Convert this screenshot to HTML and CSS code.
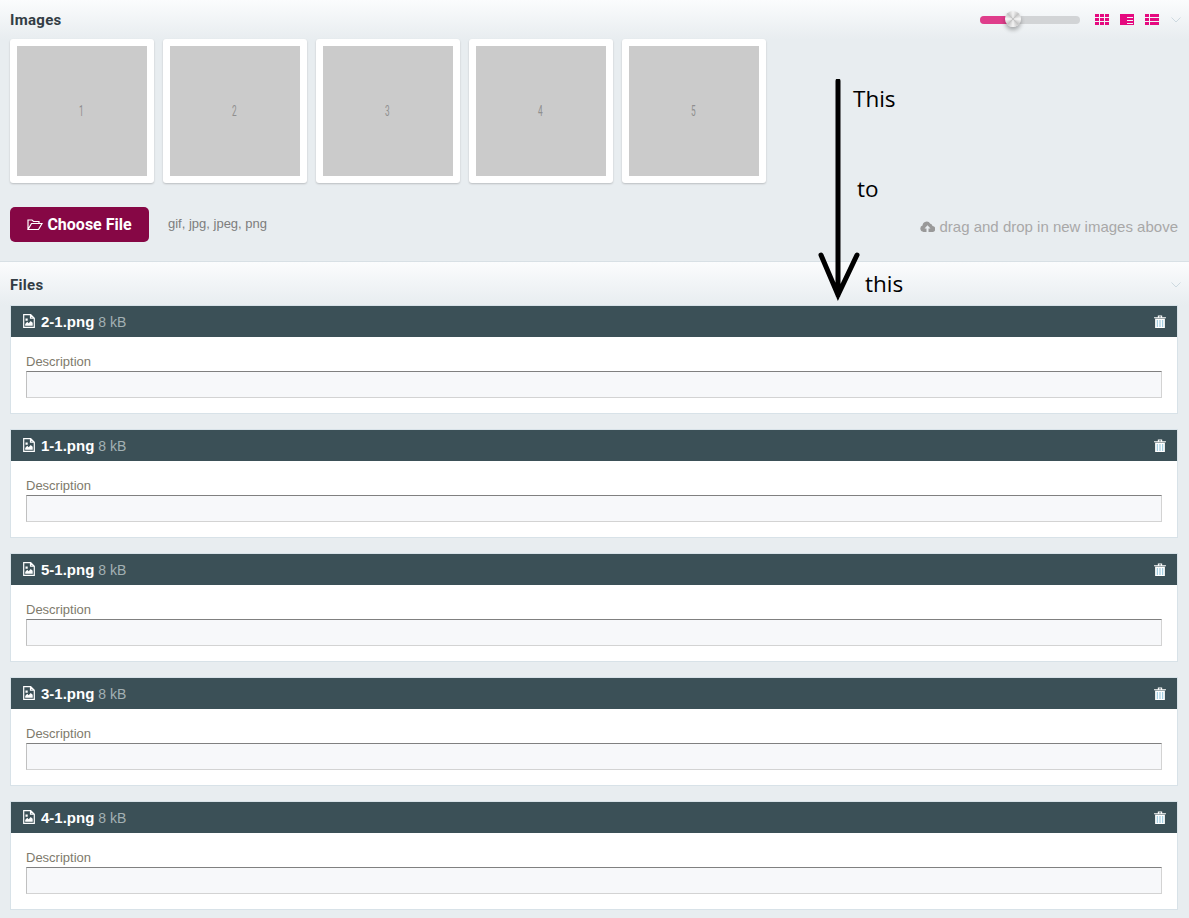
FILE: index.html
```html
<!DOCTYPE html>
<html lang="en">
<head>
    <meta charset="UTF-8">
    <title>Images and Files</title>
    <link rel="stylesheet" href="styles.css">
</head>
<body>
<section class="images">
    <div class="section-head images-head">
        <h2>Images</h2>
        <div class="tools">
            <div class="slider"><div class="slider-fill"></div><div class="slider-knob"></div></div>
            <svg class="view" viewBox="0 0 14 11"><path d="M0 0h4v3H0zM5 0h4v3H5zM10 0h4v3h-4zM0 4h4v3H0zM5 4h4v3H5zM10 4h4v3h-4zM0 8h4v3H0zM5 8h4v3H5zM10 8h4v3h-4z"/></svg>
            <svg class="view" viewBox="0 0 14 11"><path fill-rule="evenodd" d="M0 0h14v11H0zM7 3h6v1H7zM7 6h6v1H7zM7 9h6v1H7z"/></svg>
            <svg class="view" viewBox="0 0 14 11"><path d="M0 0h4v3H0zM5 0h9v3H5zM0 4h4v3H0zM5 4h9v3H5zM0 8h4v3H0zM5 8h9v3H5z"/></svg>
            <svg class="chevron" viewBox="0 0 10 6"><path d="M.5.5 5 5 9.500.5"/></svg>
        </div>
    </div>
    <div class="thumbs">
        <div class="thumb"><div class="thumb-img"><span>1</span></div></div>
        <div class="thumb"><div class="thumb-img"><span>2</span></div></div>
        <div class="thumb"><div class="thumb-img"><span>3</span></div></div>
        <div class="thumb"><div class="thumb-img"><span>4</span></div></div>
        <div class="thumb"><div class="thumb-img"><span>5</span></div></div>
    </div>
    <div class="upload">
        <button class="btn-choose">
            <svg class="icon-folder" viewBox="0 0 16 13"><path d="M1 11V2h4l1.500 1.500H12V5.500M1 11.500h10.500L15 5.500H4.500L1 11.500z"/></svg>
            Choose File
        </button>
        <span class="types">gif, jpg, jpeg, png</span>
        <span class="drop-hint">
            <svg class="icon-cloud" viewBox="0 0 15 11"><path d="M3.500 11a3.300 3.300 0 0 1-1-6.400A4.200 4.200 0 0 1 10.300 2.700 2.600 2.600 0 0 1 12.500 5 3 3 0 0 1 12 11H8.500V7.500h2L7.500 4.300 4.500 7.500h2V11z"/></svg>
            drag and drop in new images above
        </span>
    </div>
</section>

<section class="files">
    <div class="section-head files-head">
        <h2>Files</h2>
        <svg class="chevron" viewBox="0 0 10 6"><path d="M.5.5 5 5 9.500.5"/></svg>
    </div>
    <div class="file-card">
        <div class="file-bar">
            <svg class="icon-file" viewBox="0 0 12 14"><path class="outline" d="M.7.7h7L11.300 4.200v9.100H.7zM7.500.7v3.500h3.800"/><path d="M2.200 11.800V10l2-2.200 1.500 1.500 2-2.300 2 1.800v3zM2.500 4.500h2.200v2.200H2.500z"/></svg>
            <span class="file-name">2-1.png</span> <span class="file-size">8 kB</span>
            <svg class="icon-trash" viewBox="0 0 11 12"><path d="M3.500 2V.5h4V2H11v1H0V2zM4.500 2h2V1.300h-2zM1 3.500h9V12H1z"/><path class="trash-bars" d="M2.500 4.500h1.200V11H2.500zM4.900 4.500h1.200V11H4.900zM7.300 4.500h1.200V11H7.300z"/></svg>
        </div>
        <div class="file-body">
            <label>Description</label>
            <input type="text">
        </div>
    </div>
    <div class="file-card">
        <div class="file-bar">
            <svg class="icon-file" viewBox="0 0 12 14"><path class="outline" d="M.7.7h7L11.300 4.200v9.100H.7zM7.500.7v3.500h3.800"/><path d="M2.200 11.800V10l2-2.200 1.500 1.500 2-2.300 2 1.800v3zM2.500 4.500h2.200v2.200H2.500z"/></svg>
            <span class="file-name">1-1.png</span> <span class="file-size">8 kB</span>
            <svg class="icon-trash" viewBox="0 0 11 12"><path d="M3.500 2V.5h4V2H11v1H0V2zM4.500 2h2V1.300h-2zM1 3.500h9V12H1z"/><path class="trash-bars" d="M2.500 4.500h1.200V11H2.500zM4.900 4.500h1.200V11H4.900zM7.300 4.500h1.200V11H7.300z"/></svg>
        </div>
        <div class="file-body">
            <label>Description</label>
            <input type="text">
        </div>
    </div>
    <div class="file-card">
        <div class="file-bar">
            <svg class="icon-file" viewBox="0 0 12 14"><path class="outline" d="M.7.7h7L11.300 4.200v9.100H.7zM7.500.7v3.500h3.800"/><path d="M2.200 11.800V10l2-2.200 1.500 1.500 2-2.300 2 1.800v3zM2.500 4.500h2.200v2.200H2.500z"/></svg>
            <span class="file-name">5-1.png</span> <span class="file-size">8 kB</span>
            <svg class="icon-trash" viewBox="0 0 11 12"><path d="M3.500 2V.5h4V2H11v1H0V2zM4.500 2h2V1.300h-2zM1 3.500h9V12H1z"/><path class="trash-bars" d="M2.500 4.500h1.200V11H2.500zM4.900 4.500h1.200V11H4.900zM7.300 4.500h1.200V11H7.300z"/></svg>
        </div>
        <div class="file-body">
            <label>Description</label>
            <input type="text">
        </div>
    </div>
    <div class="file-card">
        <div class="file-bar">
            <svg class="icon-file" viewBox="0 0 12 14"><path class="outline" d="M.7.7h7L11.300 4.200v9.100H.7zM7.500.7v3.500h3.800"/><path d="M2.200 11.800V10l2-2.200 1.500 1.500 2-2.300 2 1.800v3zM2.500 4.500h2.200v2.200H2.500z"/></svg>
            <span class="file-name">3-1.png</span> <span class="file-size">8 kB</span>
            <svg class="icon-trash" viewBox="0 0 11 12"><path d="M3.500 2V.5h4V2H11v1H0V2zM4.500 2h2V1.300h-2zM1 3.500h9V12H1z"/><path class="trash-bars" d="M2.500 4.500h1.200V11H2.500zM4.900 4.500h1.200V11H4.900zM7.300 4.500h1.200V11H7.300z"/></svg>
        </div>
        <div class="file-body">
            <label>Description</label>
            <input type="text">
        </div>
    </div>
    <div class="file-card">
        <div class="file-bar">
            <svg class="icon-file" viewBox="0 0 12 14"><path class="outline" d="M.7.7h7L11.300 4.200v9.100H.7zM7.500.7v3.500h3.800"/><path d="M2.200 11.800V10l2-2.200 1.500 1.500 2-2.300 2 1.800v3zM2.500 4.500h2.200v2.200H2.500z"/></svg>
            <span class="file-name">4-1.png</span> <span class="file-size">8 kB</span>
            <svg class="icon-trash" viewBox="0 0 11 12"><path d="M3.500 2V.5h4V2H11v1H0V2zM4.500 2h2V1.300h-2zM1 3.500h9V12H1z"/><path class="trash-bars" d="M2.500 4.500h1.200V11H2.500zM4.900 4.500h1.200V11H4.900zM7.300 4.500h1.200V11H7.300z"/></svg>
        </div>
        <div class="file-body">
            <label>Description</label>
            <input type="text">
        </div>
    </div>
</section>

<!-- hand drawn note on top of the page -->
<svg class="arrow" viewBox="0 0 60 230"><path d="M20 2V216M3 176 20 216 39 176"/></svg>
<span class="note note-this">This</span>
<span class="note note-to">to</span>
<span class="note note-last">this</span>
</body>
</html>
```

FILE: styles.css
```css
* {
    margin: 0;
    padding: 0;
    box-sizing: border-box;
}
html, body {
    height: 918px;
    overflow: hidden;
}
body {
    position: relative;
    font-family: "Liberation Sans", Arial, sans-serif;
    background: #e8edf0;
    color: #39424a;
}
.section-head {
    display: flex;
    justify-content: space-between;
    background: linear-gradient(#fbfcfd, #e8edf0);
}
.section-head h2 {
    font-family: Roboto, "Liberation Sans", sans-serif;
    font-size: 15px;
    line-height: 17px;
    font-weight: 700;
    letter-spacing: 0.3px;
    color: #333d45;
}
.images {
    height: 261px;
}
.images-head {
    height: 39px;
    padding: 12px 8px 0 10px;
}
.tools {
    display: flex;
    align-items: flex-start;
    height: 20px;
    padding-top: 2px;
}
.slider {
    position: relative;
    width: 100px;
    height: 8px;
    margin: 2px 15px 0 0;
    background: #d2d4d6;
    border-radius: 4px;
}
.slider-fill {
    width: 33px;
    height: 8px;
    background: #df3d8b;
    border-radius: 4px 0 0 4px;
}
.slider-knob {
    position: absolute;
    left: 25px;
    top: -5px;
    width: 16px;
    height: 16px;
    border-radius: 50%;
    background: conic-gradient(#f4f4f4, #c4c4c4, #f8f8f8, #c4c4c4, #f4f4f4, #c4c4c4, #f8f8f8, #c4c4c4, #f4f4f4);
    box-shadow: 0 3px 4px rgba(0, 0, 0, 0.3);
}
.view {
    width: 14px;
    height: 11px;
    margin-right: 11px;
    fill: #e5097f;
}
.chevron {
    width: 10px;
    height: 6px;
    margin: 3px 0 0 1px;
    fill: none;
    stroke: #cdd9e0;
    stroke-width: 1;
}
.thumbs {
    display: flex;
    gap: 9px;
    padding-left: 10px;
}
.thumb {
    width: 144px;
    height: 144px;
    padding: 7px;
    background: #fff;
    border-radius: 3px;
    box-shadow: 0 1px 2px rgba(0, 0, 0, 0.2);
}
.thumb-img {
    display: flex;
    align-items: center;
    justify-content: center;
    height: 130px;
    padding-right: 2px;
    background: #cbcbcb;
    color: #8f8f8f;
    font-family: Roboto, "Liberation Sans", sans-serif;
    font-size: 15px;
}
.thumb-img span {
    display: block;
    transform: scaleX(0.55);
}
.upload {
    display: flex;
    align-items: flex-start;
    margin-top: 24px;
    padding: 0 11px 0 10px;
}
.btn-choose {
    display: flex;
    align-items: center;
    justify-content: center;
    gap: 4px;
    width: 139px;
    height: 35px;
    border: 0;
    border-radius: 5px;
    background: #860745;
    color: #fff;
    font-family: Roboto, "Liberation Sans", sans-serif;
    font-size: 16px;
    font-weight: 700;
}
.icon-folder {
    width: 16px;
    height: 13px;
    fill: none;
    stroke: #fff;
    stroke-width: 1.2;
}
.types {
    margin: 9px 0 0 19px;
    font-size: 13px;
    color: #7d7d7d;
}
.drop-hint {
    margin: 11px 0 0 auto;
    font-size: 15px;
    color: #a8a8a8;
}
.icon-cloud {
    width: 15px;
    height: 11px;
    fill: #999;
}
.files {
    border-top: 1px solid #d8e0e5;
}
.files-head {
    height: 43px;
    padding: 15px 8px 0 10px;
}
.files-head .chevron {
    margin-top: 5px;
}
.file-card {
    height: 109px;
    margin: 0 11px 15px 10px;
    border: 1px solid #d8e2e8;
    background: #fff;
}
.file-bar {
    display: flex;
    align-items: center;
    height: 31px;
    padding: 0 11px 0 12px;
    background: #3b5057;
    font-size: 15px;
}
.icon-file {
    width: 12px;
    height: 14px;
    margin: -1px 6px 0 0;
    fill: #fff;
}
.icon-file .outline {
    fill: none;
    stroke: #fff;
    stroke-width: 1.2;
}
.file-name {
    color: #fff;
    font-weight: 700;
    margin-right: 4px;
}
.file-size {
    color: #a3b0b4;
    font-size: 14px;
}
.icon-trash {
    width: 12px;
    height: 13px;
    margin: -1px 0 0 auto;
    fill: #fff;
    fill-rule: evenodd;
}
.icon-trash .trash-bars {
    fill: #a5cfe2;
}
.file-body {
    padding: 17px 15px 0;
}
.file-body label {
    display: block;
    height: 17px;
    font-size: 13px;
    line-height: 15px;
    color: #7e7a6c;
}
.file-body input {
    display: block;
    width: 100%;
    height: 27px;
    background: #f7f8fa;
    border: 1px solid #d3d3d3;
    border-top-color: #808080;
    border-left-color: #c0c0c0;
}
.arrow {
    position: absolute;
    left: 818px;
    top: 79px;
    width: 60px;
    height: 230px;
    fill: none;
    stroke: #000;
    stroke-width: 5;
    stroke-linecap: round;
}
.note {
    position: absolute;
    font-family: "Open Sans", sans-serif;
    font-size: 22.500px;
    line-height: 30px;
    color: #000;
}
.note-this { left: 853px; top: 84px; }
.note-to { left: 857px; top: 174px; }
.note-last { left: 865px; top: 269px; }
```
